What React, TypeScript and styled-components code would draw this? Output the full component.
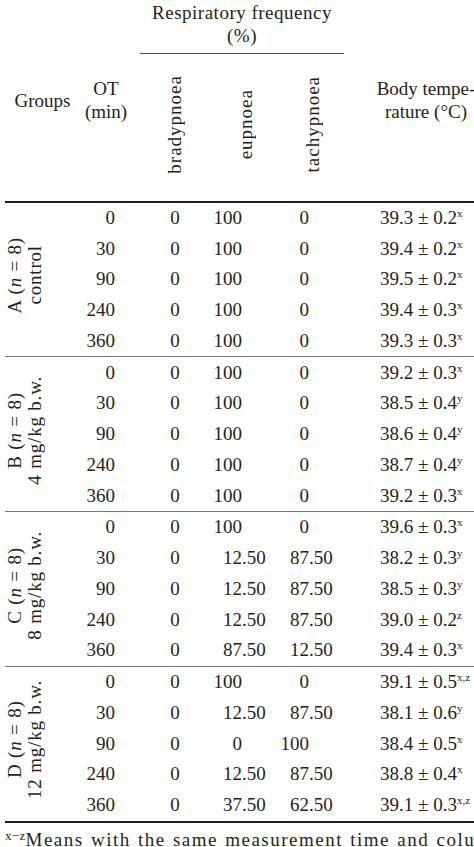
import React from "react";
import styled, { createGlobalStyle } from "styled-components";

const SERIF = `"Liberation Serif", "Times New Roman", serif`;

const Global = createGlobalStyle`
  html, body { margin: 0; padding: 0; background: #fff; overflow: hidden; }
  body { font-family: ${SERIF}; color: #231f20; }
`;

const COLS = "75px 52px 86px 55px 79px 124px";

const Page = styled.div`
  width: 474px;
  height: 847px;
  overflow: hidden;
  font-family: ${SERIF};
`;

const Table = styled.div`
  margin-left: 5px;
  width: 471px;
  font-family: ${SERIF};
  font-size: 19px;
`;

const Header = styled.div`
  display: grid;
  grid-template-columns: ${COLS};
  grid-template-rows: 54px 146.5px;
  border-bottom: 2px solid #231f20;
`;

const HeadCell = styled.div<{ $col: string; $row: string; $pl?: number }>`
  grid-column: ${(p) => p.$col};
  grid-row: ${(p) => p.$row};
  align-self: center;
  text-align: center;
  line-height: 23px;
  white-space: nowrap;
  padding-left: ${(p) => p.$pl ?? 0}px;
  font-family: ${SERIF};
`;

const SpanHead = styled.div`
  grid-column: 3 / 6;
  grid-row: 1;
  margin-left: 8px;
  margin-right: 8px;
  text-align: center;
  line-height: 22.5px;
  padding-top: 2px;
  border-bottom: 1px solid #555;
  box-sizing: border-box;
  letter-spacing: 0.5px;
  font-family: ${SERIF};
`;

const Rotated = styled.div<{ $col: number }>`
  grid-column: ${(p) => p.$col};
  grid-row: 2;
  justify-self: center;
  align-self: center;
  writing-mode: vertical-rl;
  transform: rotate(180deg);
  line-height: 20px;
  letter-spacing: 1px;
  white-space: nowrap;
  margin-bottom: 6px;
  font-family: ${SERIF};
`;

const Group = styled.div<{ $last?: boolean }>`
  display: grid;
  grid-template-columns: ${COLS};
  grid-template-rows: repeat(5, 30.75px);
  border-bottom: ${(p) => (p.$last ? "2px solid #231f20" : "1px solid #777")};
`;

const GroupLabel = styled.div`
  grid-column: 1;
  grid-row: 1 / 6;
  justify-self: start;
  align-self: center;
  writing-mode: vertical-rl;
  transform: rotate(180deg);
  text-align: center;
  line-height: 20px;
  white-space: nowrap;
  margin-bottom: 8px;
  letter-spacing: 0.8px;
  font-family: ${SERIF};
`;

const Cell = styled.div<{ $col: number; $row: number; $align: "left" | "center" | "right"; $pr?: number; $pl?: number }>`
  grid-column: ${(p) => p.$col};
  grid-row: ${(p) => p.$row};
  display: flex;
  align-items: center;
  justify-content: ${(p) => (p.$align === "left" ? "flex-start" : p.$align === "right" ? "flex-end" : "center")};
  padding-right: ${(p) => p.$pr ?? 0}px;
  padding-left: ${(p) => p.$pl ?? 0}px;
  white-space: nowrap;
  font-family: ${SERIF};
`;

const DecCell = styled.div<{ $shift: number }>`
  display: flex;
  align-items: center;
  margin-left: -${(p) => p.$shift}px;
  white-space: nowrap;
`;

const IntPart = styled.span<{ $w: number }>`
  flex: 0 0 ${(p) => p.$w}px;
  text-align: right;
`;

const Sup = styled.span`
  font-size: 11px;
  vertical-align: 7px;
  line-height: 0;
`;

const Footnote = styled.div`
  margin-left: 5px;
  font-family: ${SERIF};
  font-size: 19px;
  line-height: 22px;
  white-space: nowrap;
  letter-spacing: 1.5px;
  word-spacing: 1px;
  padding-top: 6px;
`;

const FootSup = styled.span`
  font-size: 13px;
  vertical-align: 6px;
  line-height: 0;
  letter-spacing: 0.3px;
`;

type Row = [string, string, string, string, string, string];

const groups: { l1: React.ReactNode; l2: string; rows: Row[] }[] = [
  {
    l1: <>A (<i>n</i> = 8)</>,
    l2: "control",
    rows: [
      ["0", "0", "100", "0", "39.3 ± 0.2", "x"],
      ["30", "0", "100", "0", "39.4 ± 0.2", "x"],
      ["90", "0", "100", "0", "39.5 ± 0.2", "x"],
      ["240", "0", "100", "0", "39.4 ± 0.3", "x"],
      ["360", "0", "100", "0", "39.3 ± 0.3", "x"],
    ],
  },
  {
    l1: <>B (<i>n</i> = 8)</>,
    l2: "4 mg/kg b.w.",
    rows: [
      ["0", "0", "100", "0", "39.2 ± 0.3", "x"],
      ["30", "0", "100", "0", "38.5 ± 0.4", "y"],
      ["90", "0", "100", "0", "38.6 ± 0.4", "y"],
      ["240", "0", "100", "0", "38.7 ± 0.4", "y"],
      ["360", "0", "100", "0", "39.2 ± 0.3", "x"],
    ],
  },
  {
    l1: <>C (<i>n</i> = 8)</>,
    l2: "8 mg/kg b.w.",
    rows: [
      ["0", "0", "100", "0", "39.6 ± 0.3", "x"],
      ["30", "0", "12.50", "87.50", "38.2 ± 0.3", "y"],
      ["90", "0", "12.50", "87.50", "38.5 ± 0.3", "y"],
      ["240", "0", "12.50", "87.50", "39.0 ± 0.2", "z"],
      ["360", "0", "87.50", "12.50", "39.4 ± 0.3", "x"],
    ],
  },
  {
    l1: <>D (<i>n</i> = 8)</>,
    l2: "12 mg/kg b.w.",
    rows: [
      ["0", "0", "100", "0", "39.1 ± 0.5", "x,z"],
      ["30", "0", "12.50", "87.50", "38.1 ± 0.6", "y"],
      ["90", "0", "0", "100", "38.4 ± 0.5", "x"],
      ["240", "0", "12.50", "87.50", "38.8 ± 0.4", "x"],
      ["360", "0", "37.50", "62.50", "39.1 ± 0.3", "x,z"],
    ],
  },
];

const Decimal: React.FC<{ v: string; w: number; shift: number }> = ({ v, w, shift }) => {
  const [i, f] = v.split(".");
  return (
    <DecCell $shift={shift}>
      <IntPart $w={w}>{i}</IntPart>
      {f !== undefined && <span>.{f}</span>}
    </DecCell>
  );
};

export default function App() {
  return (
    <Page>
      <Global />
      <Table>
        <Header>
          <HeadCell $col="1" $row="1 / 3">Groups</HeadCell>
          <HeadCell $col="2" $row="1 / 3">
            OT
            <br />
            (min)
          </HeadCell>
          <SpanHead>
            Respiratory frequency
            <br />
            (%)
          </SpanHead>
          <Rotated $col={3}>bradypnoea</Rotated>
          <Rotated $col={4}>eupnoea</Rotated>
          <Rotated $col={5}>tachypnoea</Rotated>
          <HeadCell $col="6" $row="1 / 3" $pl={24}>
            Body tempe-
            <br />
            rature (°C)
          </HeadCell>
        </Header>
        {groups.map((g, gi) => (
          <Group key={gi} $last={gi === groups.length - 1}>
            <GroupLabel>
              {g.l1}
              <br />
              {g.l2}
            </GroupLabel>
            {g.rows.map((r, ri) => (
              <React.Fragment key={ri}>
                <Cell $col={2} $row={ri + 1} $align="right" $pr={17}>
                  {r[0]}
                </Cell>
                <Cell $col={3} $row={ri + 1} $align="center">
                  {r[1]}
                </Cell>
                <Cell $col={4} $row={ri + 1} $align="left">
                  <Decimal v={r[2]} w={36} shift={12} />
                </Cell>
                <Cell $col={5} $row={ri + 1} $align="left">
                  <Decimal v={r[3]} w={36} shift={0} />
                </Cell>
                <Cell $col={6} $row={ri + 1} $align="left" $pl={28}>
                  <span>
                    {r[4]}
                    <Sup>{r[5]}</Sup>
                  </span>
                </Cell>
              </React.Fragment>
            ))}
          </Group>
        ))}
      </Table>
      <Footnote>
        <FootSup>x−z</FootSup>Means with the same measurement time and column differ significantly
      </Footnote>
    </Page>
  );
}
